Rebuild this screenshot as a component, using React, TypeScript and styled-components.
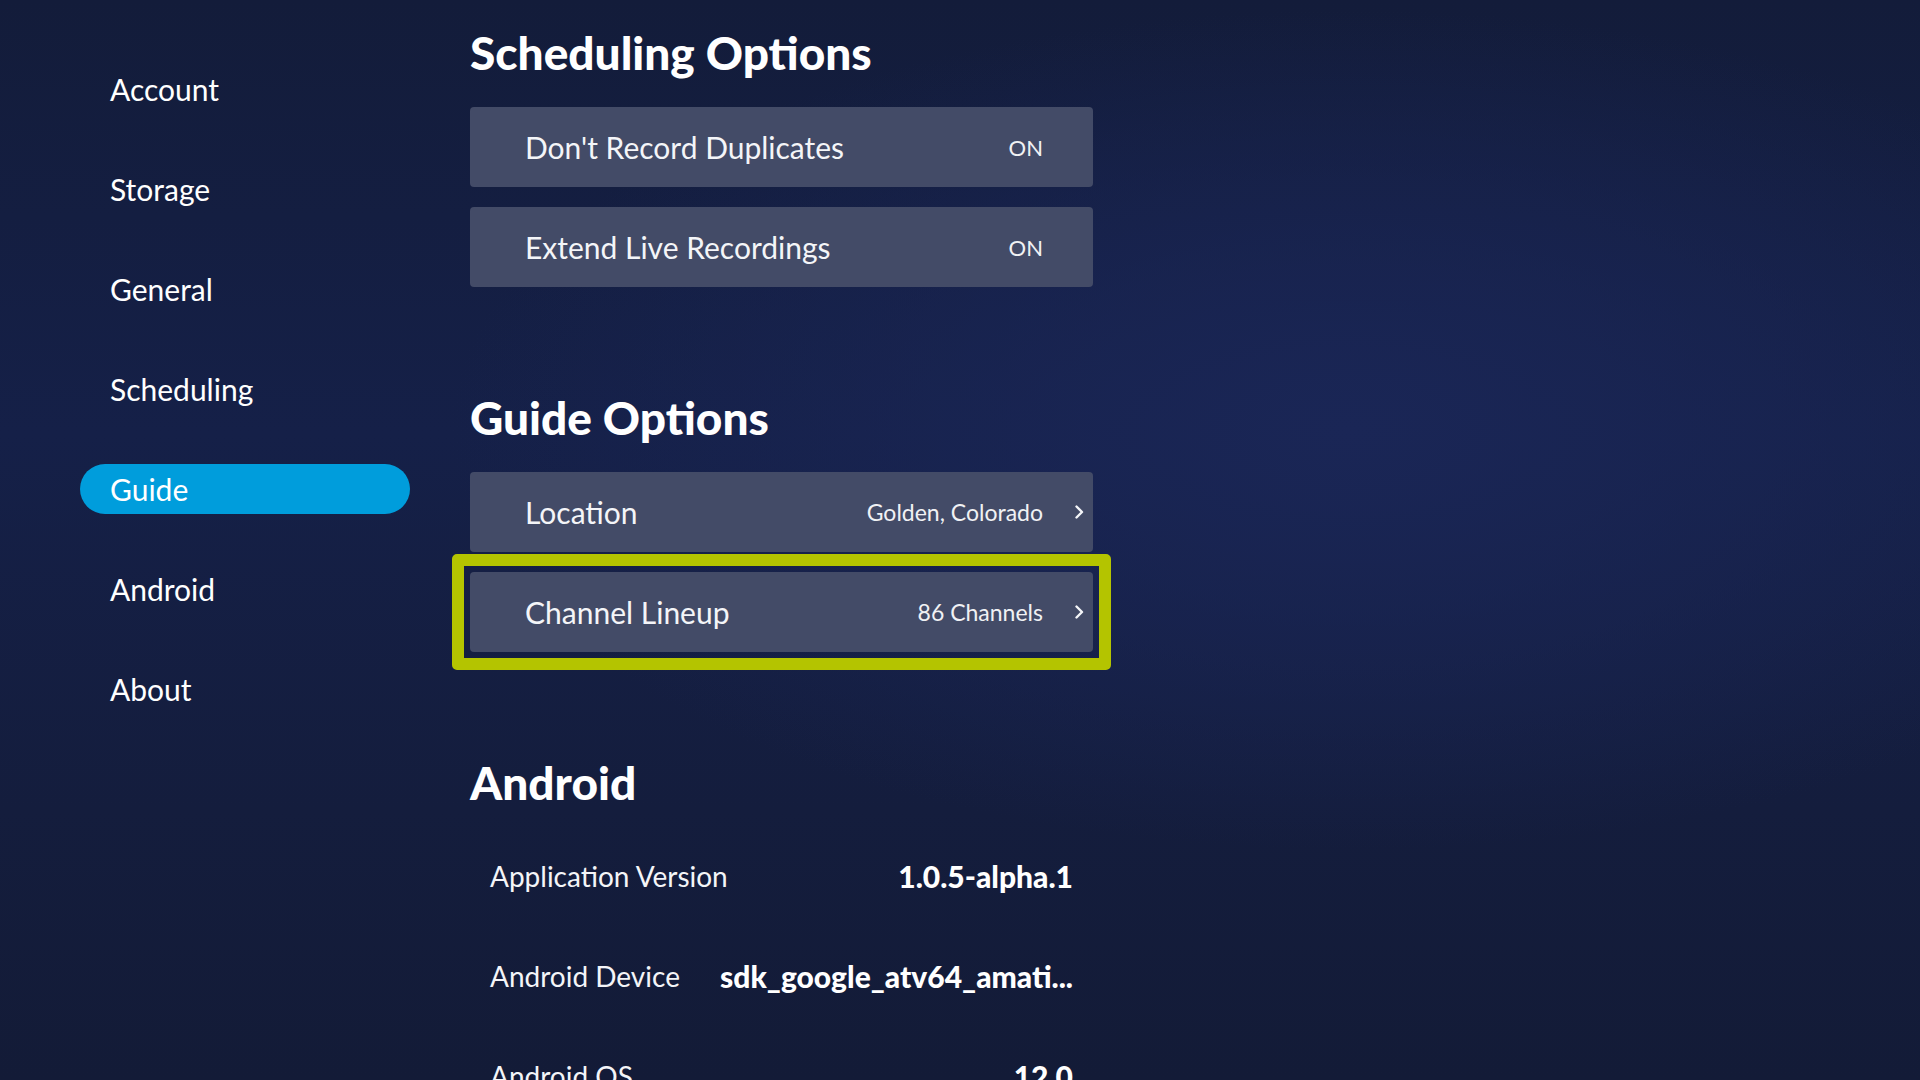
import styled, { createGlobalStyle } from "styled-components";

const GlobalStyle = createGlobalStyle`
  html, body {
    margin: 0;
    padding: 0;
    background: #141c3a;
  }
  * {
    box-sizing: border-box;
  }
`;

const Screen = styled.div`
  width: 100vw;
  height: 100vh;
  overflow: hidden;
  display: flex;
  font-family: Lato, "Liberation Sans", sans-serif;
  color: #f4f5f8;
  background:
    radial-gradient(ellipse 900px 420px at 1350px 430px, #1a2656 0%, rgba(26, 38, 86, 0.6) 45%, rgba(20, 28, 58, 0) 100%),
    linear-gradient(180deg, #131c3a 0%, #152048 40%, #141d3d 75%, #131b37 100%);
`;

const Sidebar = styled.nav`
  width: 330px;
  margin-left: 80px;
  padding-top: 64px;
  display: flex;
  flex-direction: column;
  gap: 50px;
  flex-shrink: 0;
`;

const NavItem = styled.div<{ $active?: boolean }>`
  height: 50px;
  padding-left: 30px;
  display: flex;
  align-items: center;
  border-radius: 25px;
  font-size: 30px;
  color: #ffffff;
  background: ${(p) => (p.$active ? "#009ddc" : "transparent")};
`;

const Content = styled.main`
  width: 623px;
  margin-left: 60px;
  padding-top: 23px;
`;

const Section = styled.section`
  margin-bottom: 101px;
`;

const SectionTitle = styled.h2`
  margin: 0 0 24px;
  font-size: 46px;
  line-height: 60px;
  font-weight: 900;
  color: #ffffff;
`;

const OptionList = styled.div`
  display: flex;
  flex-direction: column;
  gap: 20px;
`;

const OptionRow = styled.div<{ $focused?: boolean }>`
  position: relative;
  height: 80px;
  display: flex;
  align-items: center;
  padding-left: 55px;
  border-radius: 4px;
  background: #434b67;

  /* focus frame drawn around the row, a gap of page background inside it */
  &::after {
    content: "";
    display: ${(p) => (p.$focused ? "block" : "none")};
    position: absolute;
    inset: -18px;
    border: 12px solid #b4c400;
    border-radius: 5px;
    pointer-events: none;
  }
`;

const OptionLabel = styled.span`
  flex: 1;
  font-size: 30px;
  color: #f4f5f8;
`;

const OptionValue = styled.span<{ $small?: boolean }>`
  font-size: ${(p) => (p.$small ? "22px" : "23px")};
  color: #f0f1f4;
`;

const Trailing = styled.span`
  width: 50px;
  height: 100%;
  display: flex;
  align-items: center;
  justify-content: flex-end;
  padding-right: 9px;
`;

const InfoList = styled.div`
  margin-top: -11px;
`;

const InfoRow = styled.div`
  height: 100px;
  display: flex;
  align-items: center;
  justify-content: space-between;
  padding: 0 20px;
  font-size: 28px;
`;

const InfoLabel = styled.span`
  color: #f4f5f8;
  white-space: nowrap;
`;

const InfoValue = styled.span`
  margin-left: 36px;
  font-size: 30px;
  font-weight: 900;
  color: #ffffff;
  white-space: nowrap;
  overflow: hidden;
  text-overflow: ellipsis;
`;

function Chevron() {
  return (
    <svg width="9" height="14" viewBox="0 0 9 14" fill="none">
      <polyline
        points="1.5,1.5 7,7 1.5,12.5"
        stroke="#f4f5f8"
        strokeWidth="2.4"
        strokeLinecap="round"
        strokeLinejoin="round"
      />
    </svg>
  );
}

type Option = { label: string; value: string; link?: boolean; focused?: boolean };

const scheduling: Option[] = [
  { label: "Don't Record Duplicates", value: "ON" },
  { label: "Extend Live Recordings", value: "ON" },
];

const guide: Option[] = [
  { label: "Location", value: "Golden, Colorado", link: true },
  { label: "Channel Lineup", value: "86 Channels", link: true, focused: true },
];

const android = [
  { label: "Application Version", value: "1.0.5-alpha.1" },
  { label: "Android Device", value: "sdk_google_atv64_amati..." },
  { label: "Android OS", value: "12.0" },
];

const menu = ["Account", "Storage", "General", "Scheduling", "Guide", "Android", "About"];

function OptionGroup({ items }: { items: Option[] }) {
  return (
    <OptionList>
      {items.map((o) => (
        <OptionRow key={o.label} $focused={o.focused}>
          <OptionLabel>{o.label}</OptionLabel>
          <OptionValue $small={!o.link}>{o.value}</OptionValue>
          <Trailing>{o.link && <Chevron />}</Trailing>
        </OptionRow>
      ))}
    </OptionList>
  );
}

export default function App() {
  return (
    <>
      <GlobalStyle />
      <Screen>
        <Sidebar>
          {menu.map((m) => (
            <NavItem key={m} $active={m === "Guide"}>
              {m}
            </NavItem>
          ))}
        </Sidebar>
        <Content>
          <Section>
            <SectionTitle>Scheduling Options</SectionTitle>
            <OptionGroup items={scheduling} />
          </Section>
          <Section>
            <SectionTitle>Guide Options</SectionTitle>
            <OptionGroup items={guide} />
          </Section>
          <Section>
            <SectionTitle>Android</SectionTitle>
            <InfoList>
              {android.map((r) => (
                <InfoRow key={r.label}>
                  <InfoLabel>{r.label}</InfoLabel>
                  <InfoValue>{r.value}</InfoValue>
                </InfoRow>
              ))}
            </InfoList>
          </Section>
        </Content>
      </Screen>
    </>
  );
}
